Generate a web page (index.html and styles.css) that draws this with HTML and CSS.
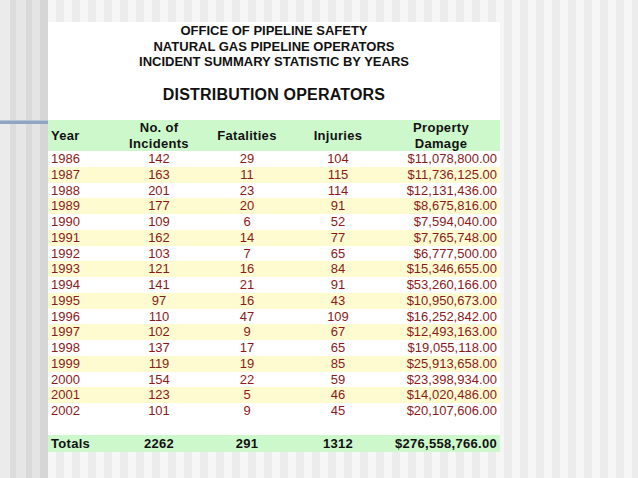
FILE: index.html
```html
<!DOCTYPE html>
<html>
<head>
<meta charset="utf-8">
<link rel="stylesheet" href="styles.css">
</head>
<body>
<div class="page">
  <div class="side"><div class="rule"></div></div>
  <div class="main">
    <div class="panel">
      <div class="titles">
        <div>OFFICE OF PIPELINE SAFETY</div>
        <div>NATURAL GAS PIPELINE OPERATORS</div>
        <div>INCIDENT SUMMARY STATISTIC BY YEARS</div>
      </div>
      <div class="heading">DISTRIBUTION OPERATORS</div>
      <div class="row head">
        <div class="c1">Year</div>
        <div class="c2">No. of<br>Incidents</div>
        <div class="c3">Fatalities</div>
        <div class="c4">Injuries</div>
        <div class="c5">Property<br>Damage</div>
      </div>
      <div class="row"><div class="c1">1986</div><div class="c2">142</div><div class="c3">29</div><div class="c4">104</div><div class="c5">$11,078,800.00</div></div>
      <div class="row alt"><div class="c1">1987</div><div class="c2">163</div><div class="c3">11</div><div class="c4">115</div><div class="c5">$11,736,125.00</div></div>
      <div class="row"><div class="c1">1988</div><div class="c2">201</div><div class="c3">23</div><div class="c4">114</div><div class="c5">$12,131,436.00</div></div>
      <div class="row alt"><div class="c1">1989</div><div class="c2">177</div><div class="c3">20</div><div class="c4">91</div><div class="c5">$8,675,816.00</div></div>
      <div class="row"><div class="c1">1990</div><div class="c2">109</div><div class="c3">6</div><div class="c4">52</div><div class="c5">$7,594,040.00</div></div>
      <div class="row alt"><div class="c1">1991</div><div class="c2">162</div><div class="c3">14</div><div class="c4">77</div><div class="c5">$7,765,748.00</div></div>
      <div class="row"><div class="c1">1992</div><div class="c2">103</div><div class="c3">7</div><div class="c4">65</div><div class="c5">$6,777,500.00</div></div>
      <div class="row alt"><div class="c1">1993</div><div class="c2">121</div><div class="c3">16</div><div class="c4">84</div><div class="c5">$15,346,655.00</div></div>
      <div class="row"><div class="c1">1994</div><div class="c2">141</div><div class="c3">21</div><div class="c4">91</div><div class="c5">$53,260,166.00</div></div>
      <div class="row alt"><div class="c1">1995</div><div class="c2">97</div><div class="c3">16</div><div class="c4">43</div><div class="c5">$10,950,673.00</div></div>
      <div class="row"><div class="c1">1996</div><div class="c2">110</div><div class="c3">47</div><div class="c4">109</div><div class="c5">$16,252,842.00</div></div>
      <div class="row alt"><div class="c1">1997</div><div class="c2">102</div><div class="c3">9</div><div class="c4">67</div><div class="c5">$12,493,163.00</div></div>
      <div class="row"><div class="c1">1998</div><div class="c2">137</div><div class="c3">17</div><div class="c4">65</div><div class="c5">$19,055,118.00</div></div>
      <div class="row alt"><div class="c1">1999</div><div class="c2">119</div><div class="c3">19</div><div class="c4">85</div><div class="c5">$25,913,658.00</div></div>
      <div class="row"><div class="c1">2000</div><div class="c2">154</div><div class="c3">22</div><div class="c4">59</div><div class="c5">$23,398,934.00</div></div>
      <div class="row alt"><div class="c1">2001</div><div class="c2">123</div><div class="c3">5</div><div class="c4">46</div><div class="c5">$14,020,486.00</div></div>
      <div class="row"><div class="c1">2002</div><div class="c2">101</div><div class="c3">9</div><div class="c4">45</div><div class="c5">$20,107,606.00</div></div>
      <div class="row blank"></div>
      <div class="row totals"><div class="c1">Totals</div><div class="c2">2262</div><div class="c3">291</div><div class="c4">1312</div><div class="c5">$276,558,766.00</div></div>
    </div>
  </div>
</div>
</body>
</html>
```
FILE: styles.css
```css
html, body {
  margin: 0;
  padding: 0;
}
body {
  width: 638px;
  height: 478px;
  overflow: hidden;
  font-family: "Liberation Sans", Arial, sans-serif;
  background: repeating-linear-gradient(90deg, #f6f6f6 0px, #f6f6f6 8px, #ececec 8px, #ececec 16px);
}
.page {
  display: flex;
  height: 478px;
}
.side {
  width: 48px;
  flex: none;
  background: repeating-linear-gradient(90deg, #ebebeb 0px, #ebebeb 10px, #dcdcdc 10px, #dcdcdc 16px, #e6e6e6 16px, #e6e6e6 26px, #d9d9d9 26px, #d9d9d9 32px, #e4e4e4 32px, #e4e4e4 40px, #d6d6d6 40px, #d6d6d6 48px);
}
.rule {
  margin-top: 120px;
  height: 4px;
  background: #8fa5c1;
  border-top: 1px solid #b4c3d6;
  box-sizing: border-box;
}
.main {
  padding-top: 22px;
}
.panel {
  width: 452px;
  background: #fff;
}
.titles {
  text-align: center;
  font-weight: bold;
  font-size: 13px;
  line-height: 15.7px;
  color: #111;
  padding-top: 1px;
}
.heading {
  text-align: center;
  font-weight: bold;
  font-size: 16px;
  letter-spacing: 0.2px;
  line-height: 20px;
  color: #111;
  margin-top: 15px;
  padding-bottom: 15px;
}
.row {
  display: grid;
  grid-template-columns: 64px 94px 82px 100px 112px;
  height: 15.75px;
  line-height: 15.75px;
  font-size: 13px;
  color: #8b1a1a;
  background: #fff;
}
.row.alt {
  background: #fffbd0;
}
.row > div {
  text-align: center;
  white-space: nowrap;
}
.row > .c1 {
  text-align: left;
  padding-left: 3px;
}
.row > .c5 {
  text-align: right;
  padding-right: 3px;
}
.row.head {
  height: 31px;
  line-height: 15.5px;
  background: #ccf8cc;
  color: #111;
  font-weight: bold;
  letter-spacing: 0.3px;
  align-items: center;
}
.row.head > .c5 {
  text-align: center;
  padding-right: 6px;
}
.row.blank {
  height: 16px;
}
.row.totals {
  height: 17px;
  line-height: 17px;
  background: #ccf8cc;
  color: #111;
  font-weight: bold;
  letter-spacing: 0.3px;
}
```
